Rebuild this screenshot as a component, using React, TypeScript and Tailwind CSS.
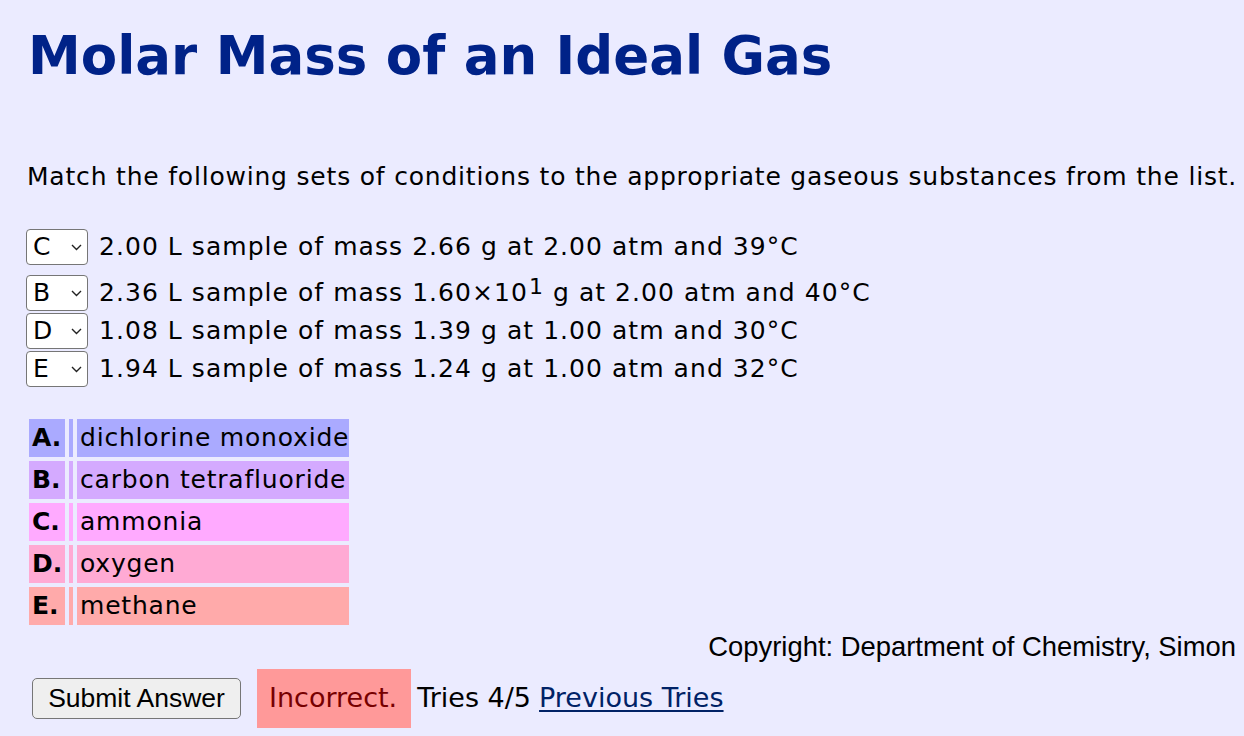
import React from "react";

const rows = [
  { pick: "C", text: <>2.00 L sample of mass 2.66 g at 2.00 atm and 39°C</> },
  {
    pick: "B",
    text: (
      <>
        2.36 L sample of mass 1.60×10
        <span className="inline-block text-[22px] leading-none relative top-[-7px] ml-[1px]">1</span> g at 2.00 atm
        and 40°C
      </>
    ),
  },
  { pick: "D", text: <>1.08 L sample of mass 1.39 g at 1.00 atm and 30°C</> },
  { pick: "E", text: <>1.94 L sample of mass 1.24 g at 1.00 atm and 32°C</> },
];

const options = [
  { key: "A.", label: "dichlorine monoxide", bg: "bg-[#aaaaff]" },
  { key: "B.", label: "carbon tetrafluoride", bg: "bg-[#d4aaff]" },
  { key: "C.", label: "ammonia", bg: "bg-[#ffaaff]" },
  { key: "D.", label: "oxygen", bg: "bg-[#ffaad4]" },
  { key: "E.", label: "methane", bg: "bg-[#ffaaaa]" },
];

function PickBox({ value }: { value: string }) {
  return (
    <div className="flex items-center justify-between w-[62px] h-[36px] bg-white border border-[#767676] rounded-[4px] pl-[6px] pr-[5px] mr-[11px] shrink-0 tracking-normal">
      <span>{value}</span>
      <svg width="11" height="7" viewBox="0 0 11 7" fill="none">
        <path d="M1 1 L5.5 5.5 L10 1" stroke="#222" strokeWidth="1.4" />
      </svg>
    </div>
  );
}

export default function App() {
  return (
    <div className="min-h-screen bg-[#ebebff] text-black font-['DejaVu_Sans',Verdana,sans-serif] text-[25px] tracking-[0.8px] overflow-hidden">
      <div className="pl-[28px] pt-[29px]">
        <h1 className="text-[53px] leading-[53px] font-bold tracking-normal text-[#002288] whitespace-nowrap">
          Molar Mass of an Ideal Gas
        </h1>

        <p className="mt-[76px] leading-[38px] whitespace-nowrap -ml-[1px]">
          Match the following sets of conditions to the appropriate gaseous substances from the list.
        </p>

        <div className="mt-[32px] -ml-[2px] tracking-[1.05px]">
          {rows.map((r, i) => (
            <div
              key={r.pick}
              className={`flex items-center h-[38px] leading-[38px] whitespace-nowrap ${i === 1 ? "mt-[8px]" : ""}`}
            >
              <PickBox value={r.pick} />
              <span>{r.text}</span>
            </div>
          ))}
        </div>

        <div className="mt-[31px] grid grid-cols-[36px_4px_272px] gap-[4px] w-max ml-[1px]">
          {options.map((o) => (
            <React.Fragment key={o.key}>
              <div className={`${o.bg} h-[38px] leading-[38px] pl-[3px] font-bold tracking-normal`}>{o.key}</div>
              <div className={o.bg} />
              <div className={`${o.bg} h-[38px] leading-[38px] pl-[3px] whitespace-nowrap`}>{o.label}</div>
            </React.Fragment>
          ))}
        </div>

        <div className="flex justify-end pr-[8px] mt-[5px] h-[34px] leading-[34px] font-['Liberation_Sans',Arial,sans-serif] text-[27.4px] tracking-normal whitespace-nowrap">
          Copyright: Department of Chemistry, Simon
        </div>

        <div className="flex items-center mt-[5px] h-[59px] whitespace-nowrap text-[27px] tracking-normal">
          <button className="ml-[4px] w-[209px] h-[41px] bg-[#efefef] border border-[#767676] rounded-[5px] font-['Liberation_Sans',Arial,sans-serif] text-[26.5px] leading-none">
            Submit Answer
          </button>
          <div className="ml-[16px] h-[59px] bg-[#ff9999] text-[#770000] pl-[12px] pr-[14px] flex items-center">
            Incorrect.
          </div>
          <span className="ml-[6px]">Tries 4/5</span>
          <a href="#" className="ml-[8px] text-[#002266] underline underline-offset-[3px]">
            Previous Tries
          </a>
        </div>
      </div>
    </div>
  );
}
